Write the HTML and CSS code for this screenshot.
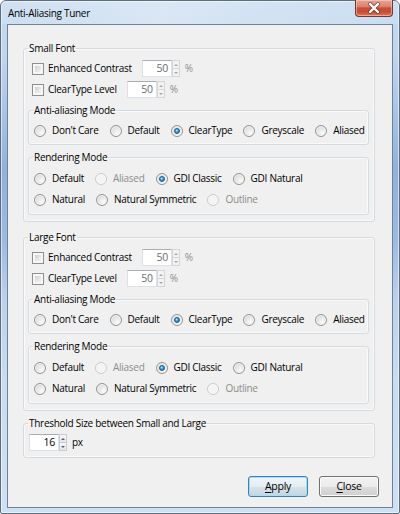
FILE: index.html
```html
<!DOCTYPE html>
<html>
<head>
<meta charset="utf-8">
<title>Anti-Aliasing Tuner</title>
<link rel="stylesheet" href="styles.css">
</head>
<body>
<div class="window">
  <div class="titlebar">
    <span class="title">Anti-Aliasing Tuner</span>
    <span class="close-btn">
      <svg class="close-x" width="14" height="12" viewBox="0 0 14 12">
        <path d="M3 2 L11 10 M11 2 L3 10" stroke="#3a3a3a" stroke-width="4" stroke-linecap="round" fill="none" opacity="0.55"/>
        <path d="M3 2 L11 10 M11 2 L3 10" stroke="#ffffff" stroke-width="2.2" stroke-linecap="round" fill="none"/>
      </svg>
    </span>
  </div>
  <div class="client">
    <fieldset class="group">
      <legend>Small Font</legend>
      <div class="check-row">
        <span class="checkbox"></span><span class="label">Enhanced Contrast</span>
        <span class="spin is-disabled"><span class="spin-box">50</span><span class="spin-btns"><span class="spin-up"></span><span class="spin-down"></span></span></span>
        <span class="unit is-disabled">%</span>
      </div>
      <div class="check-row">
        <span class="checkbox"></span><span class="label">ClearType Level</span>
        <span class="spin is-disabled"><span class="spin-box">50</span><span class="spin-btns"><span class="spin-up"></span><span class="spin-down"></span></span></span>
        <span class="unit is-disabled">%</span>
      </div>
      <fieldset class="subgroup subgroup-aa">
        <legend>Anti-aliasing Mode</legend>
        <div class="radio-row">
          <span class="radio-item"><span class="radio"></span>Don't Care</span>
          <span class="radio-item"><span class="radio"></span>Default</span>
          <span class="radio-item"><span class="radio is-checked"></span>ClearType</span>
          <span class="radio-item"><span class="radio"></span>Greyscale</span>
          <span class="radio-item"><span class="radio"></span>Aliased</span>
        </div>
      </fieldset>
      <fieldset class="subgroup subgroup-rm">
        <legend>Rendering Mode</legend>
        <div class="radio-row">
          <span class="radio-item"><span class="radio"></span>Default</span>
          <span class="radio-item is-disabled"><span class="radio"></span>Aliased</span>
          <span class="radio-item"><span class="radio is-checked"></span>GDI Classic</span>
          <span class="radio-item"><span class="radio"></span>GDI Natural</span>
        </div>
        <div class="radio-row">
          <span class="radio-item"><span class="radio"></span>Natural</span>
          <span class="radio-item"><span class="radio"></span>Natural Symmetric</span>
          <span class="radio-item is-disabled"><span class="radio"></span>Outline</span>
        </div>
      </fieldset>
    </fieldset>

    <fieldset class="group group-large">
      <legend>Large Font</legend>
      <div class="check-row">
        <span class="checkbox"></span><span class="label">Enhanced Contrast</span>
        <span class="spin is-disabled"><span class="spin-box">50</span><span class="spin-btns"><span class="spin-up"></span><span class="spin-down"></span></span></span>
        <span class="unit is-disabled">%</span>
      </div>
      <div class="check-row">
        <span class="checkbox"></span><span class="label">ClearType Level</span>
        <span class="spin is-disabled"><span class="spin-box">50</span><span class="spin-btns"><span class="spin-up"></span><span class="spin-down"></span></span></span>
        <span class="unit is-disabled">%</span>
      </div>
      <fieldset class="subgroup subgroup-aa">
        <legend>Anti-aliasing Mode</legend>
        <div class="radio-row">
          <span class="radio-item"><span class="radio"></span>Don't Care</span>
          <span class="radio-item"><span class="radio"></span>Default</span>
          <span class="radio-item"><span class="radio is-checked"></span>ClearType</span>
          <span class="radio-item"><span class="radio"></span>Greyscale</span>
          <span class="radio-item"><span class="radio"></span>Aliased</span>
        </div>
      </fieldset>
      <fieldset class="subgroup subgroup-rm">
        <legend>Rendering Mode</legend>
        <div class="radio-row">
          <span class="radio-item"><span class="radio"></span>Default</span>
          <span class="radio-item is-disabled"><span class="radio"></span>Aliased</span>
          <span class="radio-item"><span class="radio is-checked"></span>GDI Classic</span>
          <span class="radio-item"><span class="radio"></span>GDI Natural</span>
        </div>
        <div class="radio-row">
          <span class="radio-item"><span class="radio"></span>Natural</span>
          <span class="radio-item"><span class="radio"></span>Natural Symmetric</span>
          <span class="radio-item is-disabled"><span class="radio"></span>Outline</span>
        </div>
      </fieldset>
    </fieldset>

    <fieldset class="group group-threshold">
      <legend>Threshold Size between Small and Large</legend>
      <div class="threshold-row">
        <span class="spin"><span class="spin-box">16</span><span class="spin-btns"><span class="spin-up"></span><span class="spin-down"></span></span></span>
        <span class="unit">px</span>
      </div>
    </fieldset>

    <div class="buttons">
      <span class="btn btn-default"><u>A</u>pply</span>
      <span class="btn"><u>C</u>lose</span>
    </div>
  </div>
</div>
</body>
</html>
```
FILE: styles.css
```css
html, body {
  margin: 0;
  padding: 0;
  width: 400px;
  height: 514px;
  overflow: hidden;
  background: #ffffff;
}

body {
  font-family: "Open Sans", "Noto Sans", "DejaVu Sans", sans-serif;
  font-size: 10px;
  font-weight: 500;
  letter-spacing: -0.28px;
  line-height: 13px;
  color: #000;
}

/* ---------- window frame ---------- */
.window {
  box-sizing: border-box;
  width: 400px;
  height: 514px;
  border: 1px solid #5d6c7e;
  border-radius: 6px 6px 2px 2px;
  display: flex;
  flex-direction: column;
  background: linear-gradient(to bottom,
    #c7dbf0 0px, #bed4ed 60px, #a9c5e6 110px, #8fb1da 170px,
    #9dbbe1 240px, #bcd2ec 300px, #c9dcf0 380px, #cfe0f2 514px);
  box-shadow: inset 0 0 0 1px rgba(255, 255, 255, 0.55);
}

.titlebar {
  height: 23px;
  flex: none;
  display: flex;
  justify-content: space-between;
  padding: 0 6px 0 7px;
  background: linear-gradient(to right, rgba(255,255,255,0.15), rgba(255,255,255,0.35) 40%, rgba(255,255,255,0.1));
}

.title {
  align-self: center;
  margin-top: 1px;
  font-size: 10px;
  letter-spacing: -0.3px;
  color: #000;
}

.close-btn {
  box-sizing: border-box;
  width: 38px;
  height: 17px;
  margin-top: -1px;
  border: 1px solid #6a3a35;
  border-top: none;
  border-radius: 0 0 4px 4px;
  display: flex;
  align-items: center;
  justify-content: center;
  background: linear-gradient(to bottom, #e8a493 0%, #d98571 40%, #c74f38 50%, #cc4b32 75%, #e07a5a 100%);
  box-shadow: inset 0 0 0 1px rgba(255, 220, 210, 0.5);
}

.close-x {
  display: block;
}

.client {
  flex: 1;
  margin: 0 6px 5px 6px;
  border: 1px solid #6f8196;
  background: #f0f0f0;
  padding: 17px 17px 0 15px;
  display: flex;
  flex-direction: column;
}

/* ---------- group boxes ---------- */
fieldset {
  margin: 0;
  min-width: 0;
  border: 1px solid #d3dce2;
  border-radius: 3px;
  box-shadow: inset 0 0 0 1px rgba(255, 255, 255, 0.6);
}

legend {
  padding: 0 1px;
  line-height: 13px;
}

.group {
  padding: 3px 5px 6px 4px;
}

.group-large {
  margin-top: 9px;
}

.group-threshold {
  margin-top: 6px;
  padding: 2px 5px 4px 4px;
}

.subgroup {
  padding: 3px 5px 3px 4px;
}

.subgroup-aa {
  margin-top: 4px;
}

.subgroup-rm {
  margin-top: 6px;
  padding-top: 4px;
  padding-bottom: 4px;
}

/* ---------- rows ---------- */
.check-row,
.radio-row,
.threshold-row {
  height: 21px;
  display: flex;
  align-items: center;
}

.check-row {
  padding-left: 4px;
}

.threshold-row {
  padding-left: 1px;
}

.label {
  margin-left: 4px;
}

.check-row .spin {
  margin-left: 10px;
}

.unit {
  margin-left: 5px;
}

.is-disabled {
  color: #8d8d8d;
}

/* ---------- checkbox ---------- */
.checkbox {
  box-sizing: border-box;
  width: 12px;
  height: 12px;
  border: 1px solid #8e8f8f;
  padding: 2px;
  background: linear-gradient(135deg, #cdd0d4, #f4f4f4) content-box, #f7f7f7;
}

/* ---------- radio ---------- */
.radio-item {
  display: inline-flex;
  align-items: center;
  margin-right: 11px;
  white-space: nowrap;
}

.radio-row .radio-item:first-child {
  margin-left: 1px;
}

.radio {
  position: relative;
  box-sizing: border-box;
  width: 12px;
  height: 12px;
  margin-right: 6px;
  border-radius: 50%;
  border: 1px solid #939393;
  background: radial-gradient(circle at 65% 70%, #fafafa 0, #e9e9e9 40%, #cfd1d3 100%);
  box-shadow: inset 0 0 0 1px rgba(255, 255, 255, 0.7);
}

.radio.is-checked::after {
  content: "";
  position: absolute;
  left: 2px;
  top: 2px;
  width: 6px;
  height: 6px;
  box-sizing: border-box;
  border-radius: 50%;
  border: 1px solid #1d5a8a;
  background: radial-gradient(circle at 40% 35%, #bfeaff 0, #3a9fe0 45%, #0f5f98 100%);
}

.is-disabled .radio {
  border-color: #c9cacb;
  background: #f4f4f4;
}

/* ---------- spin box ---------- */
.spin {
  display: inline-flex;
  height: 17px;
}

.spin-box {
  box-sizing: border-box;
  width: 30px;
  height: 17px;
  border: 1px solid #dde0e5;
  border-top-color: #abadb3;
  background: #fff;
  text-align: right;
  padding-right: 3px;
  line-height: 15px;
  font-size: 10.5px;
}

.is-disabled .spin-box {
  color: #6d6d6d;
}

.spin-btns {
  width: 8px;
  height: 17px;
  display: flex;
  flex-direction: column;
}

.spin-up,
.spin-down {
  flex: 1;
  box-sizing: border-box;
  border: 1px solid #c9cdd3;
  background: linear-gradient(to bottom, #f7f7f7, #e5e5e5);
  display: flex;
  align-items: center;
  justify-content: center;
}

.spin-down {
  border-top: none;
}

.spin-up::after,
.spin-down::after {
  content: "";
  width: 0;
  height: 0;
  border-left: 2px solid transparent;
  border-right: 2px solid transparent;
}

.spin-up::after {
  border-bottom: 2px solid #4d6185;
}

.spin-down::after {
  border-top: 2px solid #4d6185;
}

.is-disabled .spin-up::after {
  border-bottom-color: #a7a7a7;
}

.is-disabled .spin-down::after {
  border-top-color: #a7a7a7;
}

.is-disabled .spin-up,
.is-disabled .spin-down {
  border-color: #d6d6d6;
  background: #f3f3f3;
}

/* ---------- buttons ---------- */
.buttons {
  margin-top: 18px;
  margin-right: -4px;
  display: flex;
  justify-content: flex-end;
  gap: 11px;
}

.btn {
  box-sizing: border-box;
  width: 60px;
  height: 21px;
  border: 1px solid #707070;
  border-radius: 3px;
  display: flex;
  align-items: center;
  justify-content: center;
  font-size: 10.5px;
  background: linear-gradient(to bottom, #f2f2f2 0%, #ebebeb 50%, #dddddd 51%, #cfcfcf 100%);
  box-shadow: inset 0 0 0 1px #fbfbfb;
}

.btn u {
  text-decoration-thickness: 1px;
  text-underline-offset: 2px;
}

.btn-default {
  border-color: #3c7fb1;
  background: linear-gradient(to bottom, #eef5fa 0%, #e4edf3 50%, #d6e1e9 51%, #c8d6e0 100%);
  box-shadow: inset 0 0 0 1px #a8dbf6;
}
```
